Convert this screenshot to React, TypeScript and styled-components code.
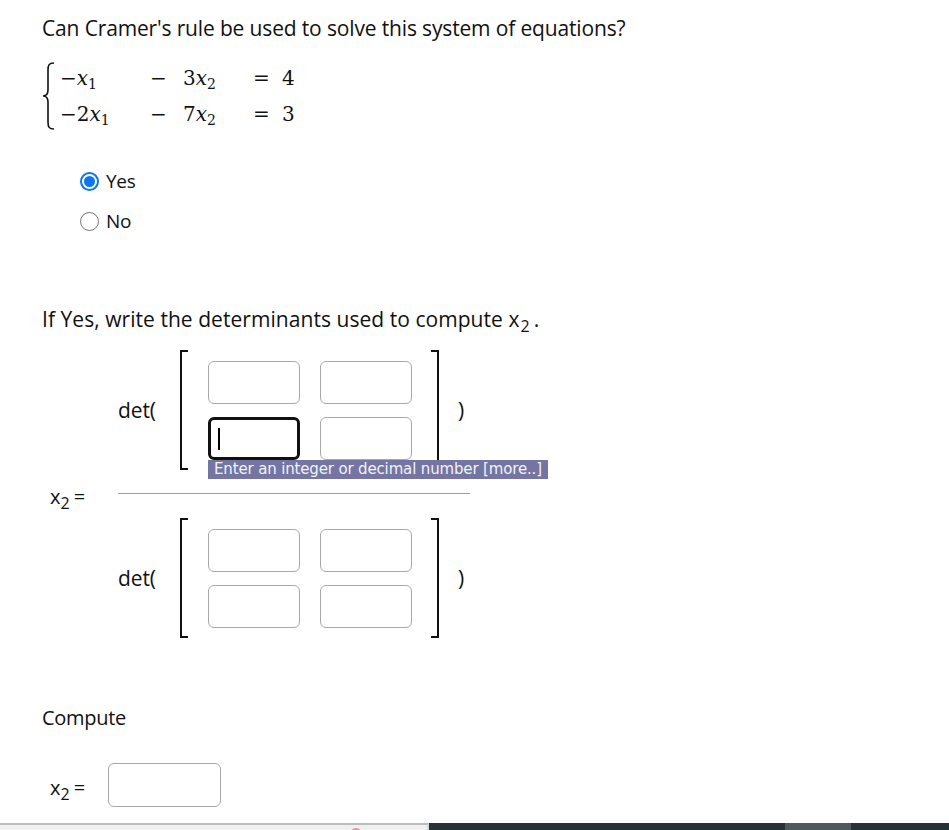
import styled, { createGlobalStyle } from "styled-components";

const GlobalStyle = createGlobalStyle`
  html, body {
    margin: 0;
    padding: 0;
    background: #fff;
  }
  body {
    font-family: "Open Sans", "Noto Sans", sans-serif;
    color: #111;
  }
`;

const Page = styled.div`
  width: 949px;
  height: 830px;
  padding: 16px 0 0 42px;
  box-sizing: border-box;
  display: flex;
  flex-direction: column;
  overflow: hidden;
`;

const Question = styled.div`
  font-size: 21px;
  line-height: 24px;
  letter-spacing: -0.15px;
`;

const SystemWrap = styled.div`
  display: flex;
  align-items: center;
  margin-top: 21px;
  height: 70px;
`;

const Brace = styled.svg`
  width: 14px;
  height: 68px;
  margin-right: 4px;
`;

const EqTable = styled.div`
  display: grid;
  grid-template-columns: 90px 33px 70px 29px 20px;
  row-gap: 8px;
  font-family: "DejaVu Serif", "Liberation Serif", serif;
  font-size: 20px;
  line-height: 28px;
`;

const Cell = styled.span`
  white-space: nowrap;
`;

const Var = styled.i`
  font-style: italic;
`;

const Sub = styled.sub`
  font-size: 14px;
  line-height: 0;
  vertical-align: -4px;
  font-style: normal;
`;

const Options = styled.div`
  display: flex;
  flex-direction: column;
  gap: 12px;
  margin: 36px 0 0 38px;
`;

const Option = styled.label`
  display: flex;
  align-items: center;
  gap: 7px;
  font-size: 19px;
  line-height: 28px;
  letter-spacing: -0.3px;
`;

const Radio = styled.span<{ $checked?: boolean }>`
  width: 19px;
  height: 19px;
  box-sizing: border-box;
  border-radius: 50%;
  border: ${(p) => (p.$checked ? "2px solid #0b75f5" : "1.5px solid #767676")};
  display: flex;
  align-items: center;
  justify-content: center;
  &::after {
    content: "";
    width: 11px;
    height: 11px;
    border-radius: 50%;
    background: ${(p) => (p.$checked ? "#0b75f5" : "transparent")};
  }
`;

const Prompt = styled.div`
  margin-top: 72px;
  font-size: 21px;
  line-height: 24px;
  letter-spacing: 0.05px;
`;

const PromptSub = styled.sub`
  font-size: 16px;
  line-height: 0;
  vertical-align: -5px;
  margin: 0 4px 0 1px;
`;

const FractionRow = styled.div`
  display: flex;
  align-items: center;
  margin-top: 19px;
  margin-left: 8px;
`;

const Label = styled.span<{ $w: number }>`
  width: ${(p) => p.$w}px;
  font-size: 20px;
  line-height: 24px;
  padding-top: 6px;
  white-space: nowrap;
`;

const LabelSub = styled.sub`
  font-size: 16px;
  line-height: 0;
  vertical-align: -5px;
  margin-right: 4px;
`;

const Fraction = styled.div`
  display: flex;
  flex-direction: column;
  width: 352px;
`;

const FracLine = styled.div`
  height: 1px;
  background: #9e9e9e;
  margin: 23px 0 24px;
`;

const DetRow = styled.div`
  display: flex;
  align-items: center;
`;

const DetText = styled.span`
  width: 62px;
  font-size: 21px;
  letter-spacing: -0.1px;
`;

const CloseParen = styled.span`
  margin-left: 19px;
  font-size: 21px;
`;

const Matrix = styled.div`
  position: relative;
  display: grid;
  grid-template-columns: 92px 92px;
  column-gap: 20px;
  row-gap: 13px;
  padding: 11px 27px 10px 28px;
  &::before,
  &::after {
    content: "";
    position: absolute;
    top: 0;
    bottom: 0;
    width: 6px;
    border: 2px solid #111;
  }
  &::before {
    left: 0;
    border-right: none;
  }
  &::after {
    right: 0;
    border-left: none;
  }
`;

const Cellbox = styled.div`
  position: relative;
`;

const Box = styled.div<{ $focus?: boolean }>`
  width: 92px;
  height: 43px;
  box-sizing: border-box;
  border-radius: 6px;
  background: #fff;
  border: ${(p) => (p.$focus ? "3px solid #111" : "1px solid #a8a8a8")};
  display: flex;
  align-items: center;
  padding-left: 7px;
`;

const Caret = styled.span`
  width: 2px;
  height: 22px;
  background: #000;
`;

const Tip = styled.div`
  position: absolute;
  top: 43px;
  left: 0;
  z-index: 2;
  white-space: nowrap;
  background: #7575a3;
  color: #f2f2f6;
  font-family: "DejaVu Sans", "Noto Sans", sans-serif;
  font-size: 15px;
  line-height: 19px;
  padding: 0 6px;
  letter-spacing: -0.15px;
`;

const Compute = styled.div`
  margin-top: 68px;
  font-size: 20px;
  line-height: 24px;
  letter-spacing: -0.3px;
`;

const AnswerRow = styled.div`
  display: flex;
  align-items: center;
  margin: 33px 0 0 8px;
`;

const AnswerBox = styled.div`
  width: 113px;
  height: 44px;
  box-sizing: border-box;
  border: 1px solid #a8a8a8;
  border-radius: 6px;
`;

const BottomBar = styled.div`
  position: fixed;
  left: 0;
  right: 0;
  bottom: 0;
  height: 7px;
  display: flex;
`;

const BarLight = styled.div`
  position: relative;
  width: 429px;
  background: #f0f0f0;
  border-top: 2px solid #bdbdbd;
  border-right: 2px solid #d8d8d8;
  box-sizing: border-box;
  &::after {
    content: "";
    position: absolute;
    left: 350px;
    top: 3px;
    width: 12px;
    height: 12px;
    border-radius: 50%;
    background: #f08aa6;
  }
`;

const BarSeg = styled.div<{ $w: number; $c: string }>`
  width: ${(p) => p.$w}px;
  background: ${(p) => p.$c};
`;

function Matrix2({ focus }: { focus?: boolean }) {
  return (
    <Matrix>
      <Box />
      <Box />
      <Cellbox>
        <Box $focus={focus}>{focus && <Caret />}</Box>
        {focus && <Tip>Enter an integer or decimal number [more..]</Tip>}
      </Cellbox>
      <Box />
    </Matrix>
  );
}

function X2() {
  return (
    <>
      x<LabelSub>2</LabelSub>=
    </>
  );
}

export default function App() {
  return (
    <>
      <GlobalStyle />
      <Page>
        <Question>Can Cramer's rule be used to solve this system of equations?</Question>

        <SystemWrap>
          <Brace viewBox="0 0 14 68">
            <path
              d="M12 1 C7 1 6 3 6 8 L6 28 C6 32 4 34 1 34 C4 34 6 36 6 40 L6 60 C6 65 7 67 12 67"
              fill="none"
              stroke="#111"
              strokeWidth="1.6"
            />
          </Brace>
          <EqTable>
            <Cell>
              −<Var>x</Var>
              <Sub>1</Sub>
            </Cell>
            <Cell>−</Cell>
            <Cell>
              3<Var>x</Var>
              <Sub>2</Sub>
            </Cell>
            <Cell>=</Cell>
            <Cell>4</Cell>
            <Cell>
              −2<Var>x</Var>
              <Sub>1</Sub>
            </Cell>
            <Cell>−</Cell>
            <Cell>
              7<Var>x</Var>
              <Sub>2</Sub>
            </Cell>
            <Cell>=</Cell>
            <Cell>3</Cell>
          </EqTable>
        </SystemWrap>

        <Options>
          <Option>
            <Radio $checked />
            Yes
          </Option>
          <Option>
            <Radio />
            No
          </Option>
        </Options>

        <Prompt>
          If Yes, write the determinants used to compute x<PromptSub>2</PromptSub>.
        </Prompt>

        <FractionRow>
          <Label $w={68}>
            <X2 />
          </Label>
          <Fraction>
            <DetRow>
              <DetText>det(</DetText>
              <Matrix2 focus />
              <CloseParen>)</CloseParen>
            </DetRow>
            <FracLine />
            <DetRow>
              <DetText>det(</DetText>
              <Matrix2 />
              <CloseParen>)</CloseParen>
            </DetRow>
          </Fraction>
        </FractionRow>

        <Compute>Compute</Compute>

        <AnswerRow>
          <Label $w={58}>
            <X2 />
          </Label>
          <AnswerBox />
        </AnswerRow>
      </Page>

      <BottomBar>
        <BarLight />
        <BarSeg $w={356} $c="#263238" />
        <BarSeg $w={66} $c="#4f5a60" />
        <BarSeg $w={98} $c="#263238" />
      </BottomBar>
    </>
  );
}
